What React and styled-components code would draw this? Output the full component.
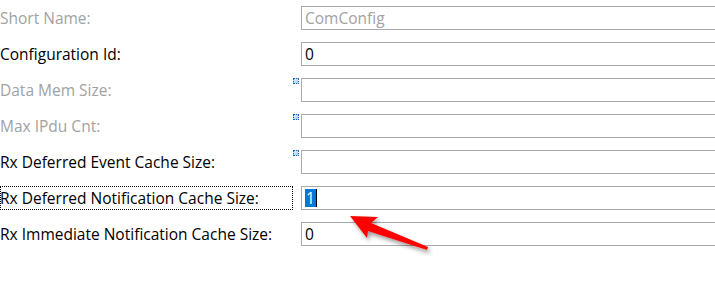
import React from 'react'
import styled, { createGlobalStyle } from 'styled-components'

const GlobalStyle = createGlobalStyle`
	html, body {
		margin: 0;
		padding: 0;
		background: #ffffff;
		overflow: hidden;
	}
	body {
		font-family: 'Open Sans', 'Noto Sans', sans-serif;
	}
`

const Page = styled.div`
	position: relative;
	width: 715px;
	height: 298px;
	overflow: hidden;
	background: #ffffff;
`

const Form = styled.div`
	display: grid;
	grid-template-columns: 301px 440px;
	row-gap: 12px;
	padding-top: 6px;
`

const Label = styled.div`
	display: flex;
	align-items: center;
	height: 24px;
	font-size: 15.5px;
	color: ${props => (props.disabled ? '#a2a2a2' : '#000000')};
	white-space: nowrap;
	box-sizing: border-box;
	width: ${props => (props.focused ? '293px' : 'auto')};
	outline: ${props => (props.focused ? '1px dotted #000' : 'none')};
	outline-offset: -1px;
`

const Cell = styled.div`
	position: relative;
	height: 24px;
`

const Field = styled.div`
	display: flex;
	align-items: center;
	box-sizing: border-box;
	height: 24px;
	border: 1px solid #aaaaaa;
	padding-left: 3px;
	font-size: 15.5px;
	color: ${props => (props.disabled ? '#a2a2a2' : '#000000')};
`

const Selected = styled.span`
	background: #0078d7;
	color: #ffffff;
	padding: 0 1px;
	line-height: 18px;
	border-right: 1px solid #000;
`

const Decorator = styled.span`
	position: absolute;
	left: -8px;
	top: 0;
	width: 4px;
	height: 4px;
	border: 1px dotted #1d5fb0;
	background: linear-gradient(135deg, #e4f1ff, #9cc8f5);
`

const Arrow = styled.svg`
	position: absolute;
	left: 340px;
	top: 205px;
	pointer-events: none;
`

const rows = [
	{ label: 'Short Name:', value: 'ComConfig', disabled: true },
	{ label: 'Configuration Id:', value: '0' },
	{ label: 'Data Mem Size:', value: '', disabled: true, decorated: true },
	{ label: 'Max IPdu Cnt:', value: '', disabled: true, decorated: true },
	{ label: 'Rx Deferred Event Cache Size:', value: '', decorated: true },
	{ label: 'Rx Deferred Notification Cache Size:', value: '1', focused: true },
	{ label: 'Rx Immediate Notification Cache Size:', value: '0' },
]

const App = () => (
	<>
		<GlobalStyle />
		<Page>
			<Form>
				{rows.map(row => (
					<React.Fragment key={row.label}>
						<Label disabled={row.disabled} focused={row.focused}>
							{row.label}
						</Label>
						<Cell>
							{row.decorated && <Decorator />}
							<Field disabled={row.disabled}>
								{row.focused ? <Selected>{row.value}</Selected> : row.value}
							</Field>
						</Cell>
					</React.Fragment>
				))}
			</Form>
			<Arrow width="100" height="60" viewBox="340 205 100 60">
				<defs>
					<filter id="shadow" x="-20%" y="-40%" width="150%" height="190%">
						<feDropShadow dx="2" dy="3" stdDeviation="2" floodColor="#000" floodOpacity="0.4" />
					</filter>
				</defs>
				<polygon
					points="350,216 378,217 371,223 428,247 427,250 368,231 367,238"
					fill="#ff0000"
					filter="url(#shadow)"
				/>
			</Arrow>
		</Page>
	</>
)

export default App
